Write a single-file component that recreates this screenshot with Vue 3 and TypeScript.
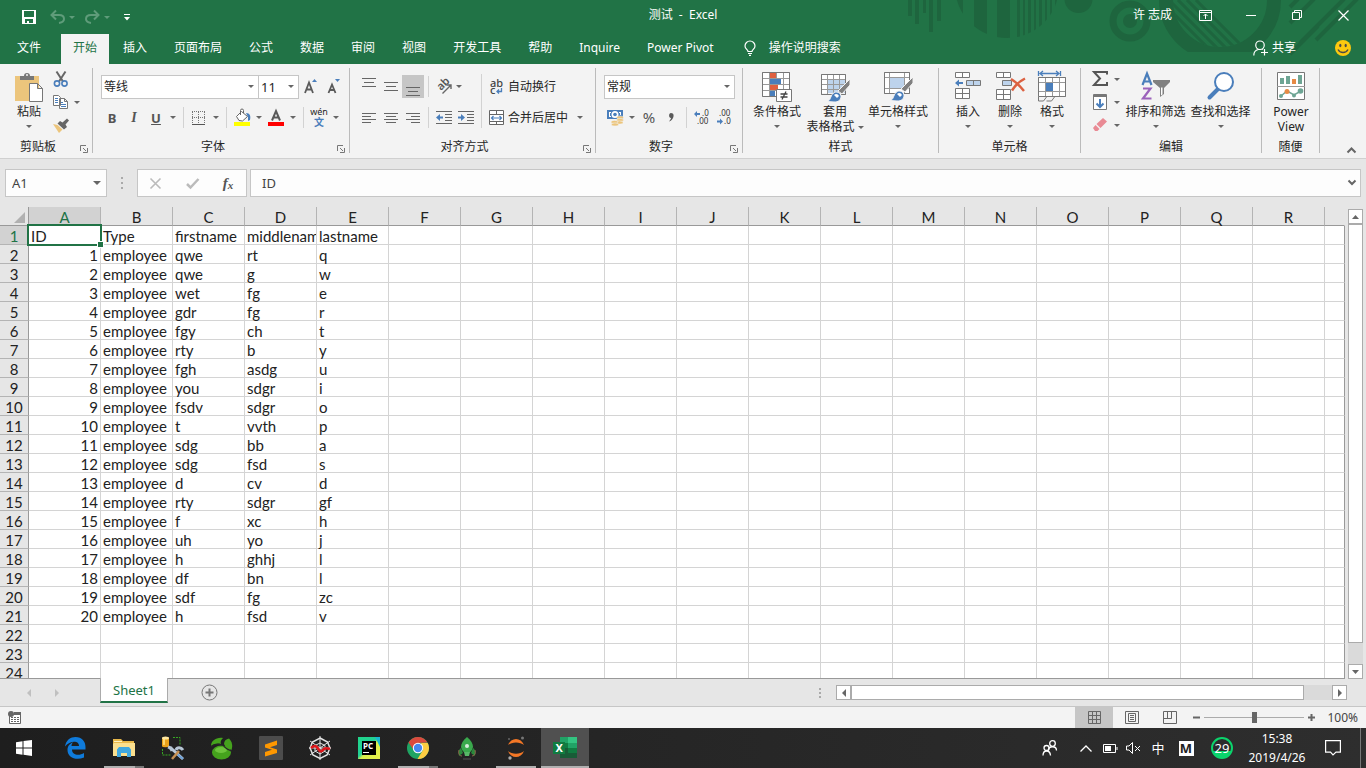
<script setup lang="ts">
import { ref } from 'vue'

const menus = ['开始', '插入', '页面布局', '公式', '数据', '审阅', '视图', '开发工具', '帮助', 'Inquire', 'Power Pivot']
const activeMenu = ref('开始')

const columns = 'ABCDEFGHIJKLMNOPQR'.split('')
const source: string[][] = [
  ['ID', 'Type', 'firstname', 'middlename', 'lastname'],
  ...[
    'qwe rt q', 'qwe g w', 'wet fg e', 'gdr fg r', 'fgy ch t', 'rty b y', 'fgh asdg u',
    'you sdgr i', 'fsdv sdgr o', 't vvth p', 'sdg bb a', 'sdg fsd s', 'd cv d', 'rty sdgr gf',
    'f xc h', 'uh yo j', 'h ghhj l', 'df bn l', 'sdf fg zc', 'h fsd v',
  ].map((line, i) => [String(i + 1), 'employee', ...line.split(' ')]),
]
const rowCount = 24
const cell = (r: number, c: number): string => source[r]?.[c] ?? ''

const fontName = ref('等线')
const fontSize = ref('11')
const numberFormat = ref('常规')
const address = ref('A1')
const formula = ref('ID')
const zoom = ref(50)
</script>

<template>
  <div class="app">
    <header class="head">
      <svg class="decor" width="506" height="64" viewBox="0 0 506 64" aria-hidden="true">
        <defs>
          <clipPath id="disc"><circle cx="147" cy="-14" r="52" /></clipPath>
          <clipPath id="ring"><circle cx="360" cy="0" r="47" /></clipPath>
          <clipPath id="cut"><rect x="290" y="0" width="216" height="52" /></clipPath>
        </defs>
        <g fill="#1e653e">
          <path d="M48 0h4v16h-4zM55 0h4v24h-4zM63 0h3v13h-3zM69 0h4v32h-4zM77 0h4v21h-4z" />
          <path clip-path="url(#disc)" d="M90 0h13v40h-13zM114 0h13v40h-13zM137 0h13v40h-13zM157 0h3v40h-3zM163 0h2v40h-2zM168 0h3v40h-3zM174 0h2v40h-2zM179 0h3v40h-3zM185 0h2v40h-2zM190 0h2v40h-2zM195 0h2v40h-2z" />
          <circle cx="218.500" cy="-1" r="14" />
          <circle cx="270" cy="21" r="7" />
        </g>
        <g fill="none" stroke="#1e653e">
          <circle cx="270" cy="21" r="17" stroke-width="7" />
          <circle cx="360" cy="0" r="54" stroke-width="14" clip-path="url(#cut)" />
          <path clip-path="url(#ring)" stroke-width="3" d="M300 0l60 60M309 0l60 60M318 0l60 60M327 0l60 60M336 0l60 60" />
          <path stroke-width="4" d="M430 7l8-8M430 23l24-24M440 43l44-44M456 40l41-41M430 54l28-28" />
        </g>
      </svg>
      <div class="titlebar">
        <div class="quick">
          <button class="q save" aria-label="保存"><svg width="14" height="14" viewBox="0 0 14 14"><path fill="#fff" fill-rule="evenodd" d="M0 0h14v14H0zM2 1v6h10V1zM3 9v4h2v-2h2v2h4V9z" /></svg></button>
          <button class="q dim" aria-label="撤消"><svg width="15" height="14" viewBox="0 0 15 14"><path fill="none" stroke="#5f9c7a" stroke-width="2" d="M6 0.500L1.500 5L6 9.500M2 5h7c3 0 5 1.500 5 4s-2 3.500-5 4" /></svg><i class="caret"></i></button>
          <button class="q dim" aria-label="恢复"><svg width="15" height="14" viewBox="0 0 15 14"><path fill="none" stroke="#5f9c7a" stroke-width="2" d="M9 0.500L13.500 5L9 9.500M13 5H6C3 5 1 6.500 1 9s2 3.500 5 4" /></svg><i class="caret"></i></button>
          <button class="q" aria-label="自定义快速访问工具栏"><svg width="6" height="7" viewBox="0 0 6 7"><path fill="#fff" d="M0 0h6v1H0zM0 3h6L3 6.500z" /></svg></button>
        </div>
        <div class="title">测试&nbsp; -&nbsp; Excel</div>
        <div class="sys">
          <span class="user">许 志成</span>
          <button class="s" aria-label="功能区显示选项"><svg width="13" height="11" viewBox="0 0 13 11"><path fill="none" stroke="#fff" d="M0.500 0.500h12v10h-12zM0 2.500h13M6.500 4v5M4.500 6l2-2 2 2" /></svg></button>
          <button class="s" aria-label="最小化"><svg width="10" height="10" viewBox="0 0 10 10"><path stroke="#fff" d="M0 5.500h10" /></svg></button>
          <button class="s" aria-label="还原"><svg width="10" height="10" viewBox="0 0 10 10"><path fill="none" stroke="#fff" d="M0.500 2.500h7v7h-7zM2.500 2V0.500h7v7H8" /></svg></button>
          <button class="s" aria-label="关闭"><svg width="11" height="11" viewBox="0 0 11 11"><path stroke="#fff" stroke-width="1.200" d="M0.500 0.500l10 10M10.500 0.500l-10 10" /></svg></button>
        </div>
      </div>
      <nav class="menus">
        <button class="menu file">文件</button>
        <button v-for="m in menus" :key="m" class="menu" :class="{ on: m === activeMenu }" @click="activeMenu = m">{{ m }}</button>
        <button class="tell"><svg width="12" height="15" viewBox="0 0 12 15"><path fill="none" stroke="#fff" stroke-width="1.200" d="M4 10.500C4 8.500 1 8 1 5a5 5 0 0 1 10 0c0 3-3 3.500-3 5.500zM4 12.500h4M5 14.400h2" /></svg>操作说明搜索</button>
        <button class="share"><svg width="15" height="16" viewBox="0 0 15 16"><path fill="none" stroke="#fff" stroke-width="1.200" d="M7 1a4 4 0 1 1 0 8.500A4 4 0 0 1 7 1zM0.800 15.500c0-3.500 2-5.500 4.500-6M11.500 9v6.500M8 12.500h7M9 9l1 .6" /></svg>共享</button>
        <button class="smile" aria-label="反馈"><svg width="16" height="16" viewBox="0 0 16 16"><circle cx="8" cy="8" r="8" fill="#fdc90f" /><ellipse cx="5.300" cy="5.500" rx="1.100" ry="1.700" fill="#4a4a4a" /><ellipse cx="10.700" cy="5.500" rx="1.100" ry="1.700" fill="#4a4a4a" /><path fill="none" stroke="#4a4a4a" stroke-width="1.300" d="M3 9.500c2 4 8 4 10 0" /></svg></button>
      </nav>
    </header>

    <section class="ribbon">
      <div class="group clip">
        <div class="body">
          <button class="big">
            <svg width="30" height="32" viewBox="0 0 30 32"><path fill="#ecc57c" d="M1 6h24v25H1z" /><path fill="#777" d="M6 6h4a3 3 0 0 1 6 0h4v4H6z" /><circle cx="13" cy="5" r="1" fill="#f3f3f3" /><path fill="#fff" stroke="#777" d="M15.500 13.500h8l5 5v13h-13zM23.500 13.500v5h5" /></svg>
            <span>粘贴</span><i class="caret"></i>
          </button>
          <div class="stack">
            <button class="tool" aria-label="剪切"><svg width="16" height="16" viewBox="0 0 16 16"><path stroke="#666" stroke-width="2" d="M3.500 0.500l6.500 10M12.500 0.500L6 10.500" /><g fill="none" stroke="#4a7ebb" stroke-width="1.600"><circle cx="4" cy="12.500" r="2.600" /><circle cx="11.500" cy="12.500" r="2.600" /></g></svg></button>
            <div class="line"><button class="tool" aria-label="复制"><svg width="16" height="14" viewBox="0 0 16 14"><path fill="#fff" stroke="#777" d="M0.500 0.500h5l2 2v8h-7zM6.500 3.500h5l3 3v7h-8zM11.500 3.500v3h3" /><path stroke="#4a7ebb" d="M2 3.500h3M2 5.500h3M2 7.500h3M8 7.500h2M8 9.500h5M8 11.500h5" /></svg></button><button class="drop" aria-label="复制选项"><i class="caret"></i></button></div>
            <button class="tool" aria-label="格式刷"><svg width="16" height="15" viewBox="0 0 16 15"><path fill="#ecc57c" d="M0 6l4.500 1L9.500 11.500 6 15z" /><path fill="#666" d="M4.500 5.500L7 3l2.500 1.500L14 0.500l2 2-3.500 4L14 9l-3 2.500z" /></svg></button>
          </div>
        </div>
        <footer><span>剪贴板</span><button class="launch" aria-label="剪贴板设置"><svg width="8" height="8" viewBox="0 0 8 8"><path fill="none" stroke="#777" d="M0.500 6V0.500H6M3 3l3 3M7.500 3v4.500H3" /></svg></button></footer>
      </div>

      <div class="group font">
        <div class="body rows">
          <div class="line">
            <label class="pick face"><select v-model="fontName" aria-label="字体"><option>等线</option><option>宋体</option></select><i class="caret"></i></label>
            <label class="pick size"><select v-model="fontSize" aria-label="字号"><option>11</option><option>12</option></select><i class="caret"></i></label>
            <button class="tool wide" aria-label="增大字号"><svg width="14" height="16" viewBox="0 0 14 16"><path fill="none" stroke="#5a5a5a" stroke-width="1.800" d="M1 14L5 3.500 9 14M2.500 10.500h5" /><path fill="#4a7ebb" d="M8 3l2.500-3L13 3z" /></svg></button>
            <button class="tool" aria-label="减小字号"><svg width="14" height="16" viewBox="0 0 14 16"><path fill="none" stroke="#5a5a5a" stroke-width="1.800" d="M1.500 14L5 5.500 8.500 14M2.500 11h5" /><path fill="#4a7ebb" d="M8 0h5l-2.500 3z" /></svg></button>
          </div>
          <div class="line">
            <button class="tool b">B</button><button class="tool it">I</button><button class="tool u">U</button><button class="drop" aria-label="下划线选项"><i class="caret"></i></button><i class="sep"></i>
            <button class="tool" aria-label="边框"><svg width="14" height="14" viewBox="0 0 14 14" shape-rendering="crispEdges"><path stroke="#777" stroke-dasharray="1 1" fill="none" d="M0 0.500h13M0.500 1v12M6.500 1v12M12.500 1v12M0 6.500h13" /><path stroke="#555" d="M0 13.500h13" /></svg></button><button class="drop" aria-label="边框选项"><i class="caret"></i></button><i class="sep"></i>
            <button class="tool" aria-label="填充颜色"><svg width="17" height="17" viewBox="0 0 17 17"><path fill="#fff" stroke="#666" d="M2.500 7.500l5-5 6 5-5 4.500-3.500-0.500zM6.500 6V1.500a1.500 1.500 0 0 1 3 0V4" /><path fill="#4a7ebb" d="M12 4c4 0 5 3 4 7l-2 1V8z" /><path fill="#ff0" d="M0 13h16v4H0z" /></svg></button><button class="drop" aria-label="填充选项"><i class="caret"></i></button>
            <button class="tool" aria-label="字体颜色"><svg width="16" height="17" viewBox="0 0 16 17"><path fill="none" stroke="#5a5a5a" stroke-width="2" d="M4 11.500L8 2l4 9.500M5.500 8.500h5" /><path fill="#f00" d="M0 13h16v4H0z" /></svg></button><button class="drop" aria-label="字体颜色选项"><i class="caret"></i></button><i class="sep"></i>
            <button class="tool wen" aria-label="拼音"><span>wén</span><b>文</b></button><button class="drop" aria-label="拼音选项"><i class="caret"></i></button>
          </div>
        </div>
        <footer><span>字体</span><button class="launch" aria-label="字体设置"><svg width="8" height="8" viewBox="0 0 8 8"><path fill="none" stroke="#777" d="M0.500 6V0.500H6M3 3l3 3M7.500 3v4.500H3" /></svg></button></footer>
      </div>

      <div class="group align">
        <div class="body">
          <div class="rows left">
            <div class="line">
              <button class="tool" aria-label="顶端对齐"><svg width="14" height="18" viewBox="0 0 14 18"><path stroke="#666" d="M0 0.500h14M2 4.500h10M0 8.500h14" /></svg></button>
              <button class="tool" aria-label="垂直居中"><svg width="14" height="18" viewBox="0 0 14 18"><path stroke="#666" d="M0 4.500h14M2 8.500h10M0 12.500h14" /></svg></button>
              <button class="tool pressed" aria-label="底端对齐"><svg width="14" height="18" viewBox="0 0 14 18"><path stroke="#666" d="M0 9.500h14M2 13.500h10M0 17.500h14" /></svg></button>
              <i class="sep"></i>
              <button class="tool" aria-label="方向"><svg width="18" height="18" viewBox="0 0 18 18"><text x="0" y="0" transform="translate(6 13) rotate(-45)" font-family="Noto Sans" font-size="11" font-weight="600" fill="#555">ab</text><path fill="none" stroke="#666" stroke-width="1.400" d="M7.500 15.500l8-8M12 7h4v4" /></svg></button><button class="drop tight" aria-label="方向选项"><i class="caret"></i></button>
            </div>
            <div class="line">
              <button class="tool" aria-label="左对齐"><svg width="14" height="12" viewBox="0 0 14 12"><path stroke="#666" d="M0 1.500h14M0 4.500h9M0 7.500h14M0 10.500h9" /></svg></button>
              <button class="tool" aria-label="居中"><svg width="14" height="12" viewBox="0 0 14 12"><path stroke="#666" d="M0 1.500h14M2 4.500h10M0 7.500h14M2 10.500h10" /></svg></button>
              <button class="tool" aria-label="右对齐"><svg width="14" height="12" viewBox="0 0 14 12"><path stroke="#666" d="M0 1.500h14M5 4.500h9M0 7.500h14M5 10.500h9" /></svg></button>
              <i class="sep"></i>
              <button class="tool" aria-label="减少缩进量"><svg width="16" height="14" viewBox="0 0 16 14"><path stroke="#666" d="M0 0.500h16M9 3.500h7M9 6.500h7M9 9.500h7M0 12.500h16" /><path fill="#4a7ebb" d="M0 6.500L4 3v2.500h3v2H4V10z" /></svg></button>
              <button class="tool" aria-label="增加缩进量"><svg width="16" height="14" viewBox="0 0 16 14"><path stroke="#666" d="M0 0.500h16M9 3.500h7M9 6.500h7M9 9.500h7M0 12.500h16" /><path fill="#4a7ebb" d="M7 6.500L3 3v2.500H0v2h3V10z" /></svg></button>
            </div>
          </div>
          <div class="rows right">
            <button class="text"><svg width="16" height="18" viewBox="0 0 16 18"><g font-family="Noto Sans" font-size="11" font-weight="500" fill="#444"><text x="1" y="9">ab</text><text x="1" y="16">c</text></g><path fill="none" stroke="#4a7ebb" stroke-width="1.300" d="M12.500 10v3.500H8M10 11.500l-2 2 2 2" /></svg>自动换行</button>
            <div class="line"><button class="text"><svg width="16" height="16" viewBox="0 0 16 16"><path fill="#fff" stroke="#666" d="M0.500 0.500h14v14h-14zM0 4.500h15M0 11.500h15M7.500 0v4M7.500 12v3" /><path fill="none" stroke="#4a7ebb" stroke-width="1.200" d="M2.500 8h10M4.500 6l-2 2 2 2M10.500 6l2 2-2 2" /></svg>合并后居中</button><button class="drop far" aria-label="合并选项"><i class="caret"></i></button></div>
          </div>
        </div>
        <footer><span>对齐方式</span><button class="launch" aria-label="对齐设置"><svg width="8" height="8" viewBox="0 0 8 8"><path fill="none" stroke="#777" d="M0.500 6V0.500H6M3 3l3 3M7.500 3v4.500H3" /></svg></button></footer>
      </div>

      <div class="group number">
        <div class="body rows">
          <div class="line"><label class="pick format"><select v-model="numberFormat" aria-label="数字格式"><option>常规</option><option>文本</option></select><i class="caret"></i></label></div>
          <div class="line">
            <button class="tool" aria-label="会计数字格式"><svg width="17" height="16" viewBox="0 0 17 16"><path fill="#4a7ebb" d="M0 0h16v9H0z" /><path fill="#fff" d="M2 2h2v1H3v3h1v1H2zM14 2h-2v1h1v2h1zM8 1a3.500 3.500 0 0 1 0 7 3.500 3.500 0 0 1 0-7z" /><circle cx="8" cy="4.500" r="1.800" fill="#4a7ebb" /><g fill="#ecc57c" stroke="#f3f3f3" stroke-width="0.500"><ellipse cx="13" cy="7.500" rx="3.500" ry="1.600" /><ellipse cx="13" cy="10" rx="3.500" ry="1.600" /><ellipse cx="12.500" cy="12.500" rx="3.500" ry="1.600" /><ellipse cx="7.500" cy="12" rx="3.500" ry="1.600" /><ellipse cx="8" cy="14.400" rx="3.500" ry="1.500" /></g></svg></button><button class="drop" aria-label="会计格式选项"><i class="caret"></i></button>
            <button class="tool pct">%</button>
            <button class="tool" aria-label="千位分隔样式"><svg width="6" height="9" viewBox="0 0 6 9"><path fill="#5a5a5a" d="M3 0c3 0 3 3 2 5S3 8 1 8.500C2 7 3 6 3 5 0.500 5 0.500 0 3 0z" /></svg></button><i class="sep"></i>
            <button class="tool" aria-label="增加小数位数"><svg width="16" height="16" viewBox="0 0 16 16"><g font-family="Noto Sans" font-size="8" fill="#333"><text x="8" y="6">.0</text><text x="3" y="14">.00</text></g><path fill="#4a7ebb" d="M0 4l3-3v2h3v2H3v2z" /></svg></button>
            <button class="tool" aria-label="减少小数位数"><svg width="16" height="16" viewBox="0 0 16 16"><g font-family="Noto Sans" font-size="8" fill="#333"><text x="3" y="6">.00</text><text x="8" y="14">.0</text></g><path fill="#4a7ebb" d="M7 11.500l-3-3v2H1v2h3v2z" /></svg></button>
          </div>
        </div>
        <footer><span>数字</span><button class="launch" aria-label="数字设置"><svg width="8" height="8" viewBox="0 0 8 8"><path fill="none" stroke="#777" d="M0.500 6V0.500H6M3 3l3 3M7.500 3v4.500H3" /></svg></button></footer>
      </div>

      <div class="group styles">
        <div class="body">
          <button class="big">
            <svg width="32" height="32" viewBox="0 0 32 32"><path fill="#fff" stroke="#999" d="M1.500 2.500h27v24h-27zM1.500 8.500h27M1.500 14.500h27M1.500 20.500h27M8.500 2.500v24M15.500 2.500v24M22.500 2.500v24" /><path fill="#e0603f" d="M9 3h6v5H9zM9 15h8v5H9z" /><path fill="#4a7ebb" d="M9 9h11v5H9zM9 21h5v5H9z" /><path fill="none" stroke="#777" d="M1.500 2.500h27v24h-27z" /><path fill="#fff" stroke="#777" d="M15.500 19.500h15v12h-15z" /><path fill="none" stroke="#444" stroke-width="1.300" d="M19.500 24h7M19.500 27h7M25 21.500l-4 8" /></svg>
            <span>条件格式</span><i class="caret"></i>
          </button>
          <button class="big two">
            <svg width="32" height="32" viewBox="0 0 32 32"><path fill="#bdd3ec" d="M9 9h17v14H9z" /><path fill="#fff" d="M2 5h24v5H2zM2 5h7v18H2z" /><path fill="none" stroke="#999" d="M2.500 4.500h24v20h-24zM2.500 9.500h24M2.500 14.500h24M2.500 19.500h24M8.500 4.500v20M14.500 4.500v20M20.500 4.500v20" /><path fill="none" stroke="#777" d="M2.500 4.500h24v20h-24z" /><path fill="#808080" stroke="#f3f3f3" d="M31 9v6l-8 9-4-3z" /><path fill="#4a7ebb" stroke="#f3f3f3" d="M8 31.500c4-1 3-5 6-8s8-1 8 3-3 5.500-7 5.500z" /><path fill="#fff" d="M15 25c2-2 4-1 5 1l-2 2z" /></svg>
            <span>套用</span><span class="second">表格格式<i class="caret"></i></span>
          </button>
          <button class="big wider">
            <svg width="32" height="32" viewBox="0 0 32 32"><path fill="#fff" stroke="#999" d="M2.500 2.500h25v21h-25zM2.500 7.500h25M2.500 18.500h25M7.500 2.500v21M22.500 2.500v21" /><path fill="#bdd3ec" d="M8 8h14v10H8z" /><path fill="none" stroke="#777" d="M2.500 2.500h25v21h-25z" /><path fill="#808080" stroke="#f3f3f3" d="M31 7v6l-8 9-4-3z" /><path fill="#4a7ebb" stroke="#f3f3f3" d="M8 30.500c4-1 3-5 6-8s8-1 8 3-3 5.500-7 5.500z" /><path fill="#fff" d="M15 24c2-2 4-1 5 1l-2 2z" /></svg>
            <span>单元格样式</span><i class="caret"></i>
          </button>
        </div>
        <footer><span>样式</span></footer>
      </div>

      <div class="group cells">
        <div class="body">
          <button class="big">
            <svg width="28" height="32" viewBox="0 0 28 32"><path fill="#fff" stroke="#777" d="M1.500 2.500h14v5h-14zM8.500 2.500v5M1.500 18.500h14v10h-14zM8.500 18.500v10M1.500 23.500h14" /><path fill="#bdd3ec" stroke="#777" d="M12.500 10.500h14v5h-14zM19.500 10.500v5" /><path fill="#4a7ebb" d="M1 13l4-3.500V12h4v2H5v2.500z" /></svg>
            <span>插入</span><i class="caret"></i>
          </button>
          <button class="big">
            <svg width="32" height="32" viewBox="0 0 32 32"><path fill="#fff" stroke="#777" d="M2.500 2.500h14v5h-14zM9.500 2.500v5M2.500 19.500h14v10h-14zM9.500 19.500v10M2.500 24.500h14" /><path fill="#bdd3ec" stroke="#777" d="M8.500 10.500h9v5h-9z" /><path fill="none" stroke="#dc6141" stroke-width="2.500" d="M17 9c5 3 9 7 13 12M31 8.500c-6 3-10 7-13 12" /></svg>
            <span>删除</span><i class="caret"></i>
          </button>
          <button class="big">
            <svg width="30" height="32" viewBox="0 0 30 32"><path fill="none" stroke="#4a7ebb" stroke-width="1.300" d="M1.500 1v5M23.500 1v5M3 3.500h19M6 1L3 3.500 6 6M19 1l3 2.500L19 6" /><path fill="#fff" stroke="#999" d="M1.500 7.500h27v19h-27zM1.500 12.500h27M1.500 21.500h27M8.500 7.500v19M15.500 7.500v19M22.500 7.500v19" /><path fill="#4a7ebb" d="M9 13h7v8H9z" /><path fill="none" stroke="#777" d="M1.500 7.500h27v19h-27zM1.500 27v4h5l3-4M9.500 31h5l3-4" /></svg>
            <span>格式</span><i class="caret"></i>
          </button>
        </div>
        <footer><span>单元格</span></footer>
      </div>

      <div class="group edit">
        <div class="body">
          <div class="stack">
            <div class="line"><button class="tool" aria-label="自动求和"><svg width="16" height="16" viewBox="0 0 16 16"><path fill="none" stroke="#555" stroke-width="2" d="M15 3.500V1H2l6 6.500L2 14h13v-3" /></svg></button><button class="drop" aria-label="求和选项"><i class="caret"></i></button></div>
            <div class="line"><button class="tool" aria-label="填充"><svg width="15" height="16" viewBox="0 0 15 16"><path fill="#fff" stroke="#777" d="M0.500 0.500h13v15h-13z" /><path fill="#777" d="M1 1h13v2H1z" /><path fill="none" stroke="#4a7ebb" stroke-width="2" d="M7 5v8M3.500 9.500L7 13l3.500-3.500" /></svg></button><button class="drop" aria-label="填充选项"><i class="caret"></i></button></div>
            <div class="line"><button class="tool" aria-label="清除"><svg width="14" height="14" viewBox="0 0 14 14"><path fill="#e98a94" d="M10 0l4 3.500L7.500 10 3.500 6zM2.500 7l4 4L4.500 13H2L0 10z" /></svg></button><button class="drop" aria-label="清除选项"><i class="caret"></i></button></div>
          </div>
          <button class="big wider">
            <svg width="32" height="32" viewBox="0 0 32 32"><path fill="none" stroke="#4a7ebb" stroke-width="2.200" d="M2.500 15L7 3.500 11.500 15M4 11.500h6" /><path fill="none" stroke="#9b62bb" stroke-width="2.200" d="M3 18.500h7.500L3 28.500h8.500" /><path fill="#808080" d="M13 10h17v2l-6 6v6l-4 3v-9l-7-6z" /><path fill="#fff" d="M21 17.500h1.500v7L21 25.500z" /></svg>
            <span>排序和筛选</span><i class="caret"></i>
          </button>
          <button class="big wider">
            <svg width="30" height="32" viewBox="0 0 30 32"><path stroke="#4a7ebb" stroke-width="4" stroke-linecap="round" d="M3.500 27.500l9-9" /><circle cx="18" cy="12" r="9" fill="#fff" stroke="#4a7ebb" stroke-width="2" /></svg>
            <span>查找和选择</span><i class="caret"></i>
          </button>
        </div>
        <footer><span>编辑</span></footer>
      </div>

      <div class="group pv">
        <div class="body">
          <button class="big">
            <svg width="30" height="32" viewBox="0 0 30 32"><path fill="#fff" stroke="#777" d="M1.500 2.500h27v27h-27z" /><path stroke="#999" d="M1 16.500h28" /><path fill="#6ea594" d="M4 8h4v6H4zM10 6h4v8h-4zM22 5h4v9h-4z" /><path fill="#e68a45" d="M16 9h4v5h-4z" /><path fill="none" stroke="#6ea594" stroke-width="1.500" d="M5 26l6-5 7 4 7-4" /><circle cx="11" cy="21.500" r="2.500" fill="#e68a45" /><g fill="#6ea594"><circle cx="5" cy="26" r="2" /><circle cx="18" cy="25.500" r="2" /><circle cx="24.500" cy="21" r="2.800" /></g></svg>
            <span>Power</span><span class="second">View</span>
          </button>
        </div>
        <footer><span>随便</span></footer>
      </div>
      <button class="collapse" aria-label="折叠功能区"><svg width="9" height="6" viewBox="0 0 9 6"><path fill="none" stroke="#666" stroke-width="2" d="M0.500 5.500l4-4 4 4" /></svg></button>
    </section>

    <section class="formula">
      <label class="box name"><input v-model="address" aria-label="名称框" /><i class="caret large"></i></label>
      <svg class="grip" width="2" height="12" viewBox="0 0 2 12"><path fill="#aaa" d="M0 0h2v2H0zM0 5h2v2H0zM0 10h2v2H0z" /></svg>
      <div class="box acts">
        <button aria-label="取消"><svg width="12" height="11" viewBox="0 0 12 11"><path stroke="#bbb" stroke-width="1.600" d="M0.500 0.500l10 10M10.500 0.500l-10 10" /></svg></button>
        <button aria-label="输入"><svg width="13" height="11" viewBox="0 0 13 11"><path fill="none" stroke="#bbb" stroke-width="2.500" d="M1 6l3.500 3.500L12.500 1" /></svg></button>
        <button class="fx"><span>f</span><small>x</small></button>
      </div>
      <div class="box value"><input v-model="formula" aria-label="编辑栏" /><svg width="8" height="6" viewBox="0 0 8 6"><path fill="none" stroke="#666" stroke-width="2" d="M0.500 0.500l3.500 3.500 3.500-3.500" /></svg></div>
    </section>

    <main class="sheet">
      <div class="grid">
        <table>
          <colgroup><col class="rh" /><col v-for="c in columns" :key="c" class="c" /><col /></colgroup>
          <thead>
            <tr>
              <th class="corner"><svg width="11" height="11" viewBox="0 0 11 11"><path fill="#b1b1b1" d="M11 0v11H0z" /></svg></th>
              <th v-for="(c, i) in columns" :key="c" :class="{ sel: i === 0 }">{{ c }}</th>
              <th class="rest"></th>
            </tr>
          </thead>
          <tbody>
            <tr v-for="r in rowCount" :key="r">
              <th :class="{ sel: r === 1 }">{{ r }}</th>
              <td v-for="(c, i) in columns" :key="c" :class="{ num: i === 0 && r > 1, active: i === 0 && r === 1 }">{{ cell(r - 1, i) }}</td>
              <td class="rest"></td>
            </tr>
          </tbody>
        </table>
      </div>
      <div class="vscroll">
        <button aria-label="向上滚动"><svg width="7" height="4" viewBox="0 0 7 4"><path fill="#666" d="M0 4h7L3.500 0z" /></svg></button>
        <div class="vthumb"></div><div class="vtrack"></div>
        <button aria-label="向下滚动"><svg width="7" height="4" viewBox="0 0 7 4"><path fill="#666" d="M0 0h7L3.500 4z" /></svg></button>
      </div>
    </main>

    <section class="tabs">
      <div class="step">
        <button aria-label="上一个工作表"><svg width="4" height="8" viewBox="0 0 4 8"><path fill="#c0c0c0" d="M4 0v8L0 4z" /></svg></button>
        <button aria-label="下一个工作表"><svg width="4" height="8" viewBox="0 0 4 8"><path fill="#c0c0c0" d="M0 0v8l4-4z" /></svg></button>
      </div>
      <button class="tab">Sheet1</button>
      <button class="add" aria-label="新工作表"><svg width="17" height="17" viewBox="0 0 17 17"><circle cx="8.500" cy="8.500" r="7.500" fill="none" stroke="#777" /><path stroke="#777" stroke-width="2" d="M4.500 8.500h8M8.500 4.500v8" /></svg></button>
      <svg class="grip2" width="2" height="10" viewBox="0 0 2 10"><path fill="#aaa" d="M0 0h2v2H0zM0 4h2v2H0zM0 8h2v2H0z" /></svg>
      <div class="hscroll">
        <button aria-label="向左滚动"><svg width="4" height="8" viewBox="0 0 4 8"><path fill="#666" d="M4 0v8L0 4z" /></svg></button>
        <div class="hthumb"></div><div class="htrack"></div>
        <button aria-label="向右滚动"><svg width="4" height="8" viewBox="0 0 4 8"><path fill="#666" d="M0 0v8l4-4z" /></svg></button>
      </div>
    </section>

    <section class="status">
      <button class="macro" aria-label="录制宏"><svg width="13" height="13" viewBox="0 0 13 13"><path fill="#fff" stroke="#666" d="M1.500 3.500h11v9h-11z" /><path fill="#666" d="M6 1h7v3H6z" /><path stroke="#666" stroke-dasharray="2 1" d="M3 6.500h9M3 8.500h9M3 10.500h9" /><circle cx="3" cy="3" r="3" fill="#666" /></svg></button>
      <div class="views">
        <button class="on" aria-label="普通"><svg width="13" height="13" viewBox="0 0 13 13"><path fill="none" stroke="#666" d="M0.500 0.500h12v12h-12zM0 4.500h13M0 8.500h13M4.500 0v13M8.500 0v13" /></svg></button>
        <button aria-label="页面布局"><svg width="14" height="13" viewBox="0 0 14 13"><path fill="none" stroke="#666" d="M0.500 0.500h13v12h-13zM3.500 2.500h7v8h-7zM5 4.500h4M5 6.500h4M5 8.500h4" /></svg></button>
        <button aria-label="分页预览"><svg width="14" height="13" viewBox="0 0 14 13"><path fill="none" stroke="#666" d="M0.500 0.500h13v12h-13zM4.500 0v7.500h4V0M1 7.500h4M8.500 7.500V0" /></svg></button>
      </div>
      <button class="pm" aria-label="缩小"><svg width="7" height="7" viewBox="0 0 7 7"><path fill="#666" d="M0 2.500h7v2H0z" /></svg></button>
      <input v-model="zoom" class="slider" type="range" min="0" max="100" aria-label="显示比例" />
      <button class="pm" aria-label="放大"><svg width="7" height="7" viewBox="0 0 7 7"><path fill="#666" d="M0 2.500h2.500V0h2v2.500H7v2H4.500V7h-2V4.500H0z" /></svg></button>
      <button class="percent">100%</button>
    </section>

    <footer class="taskbar">
      <button class="app-btn start" aria-label="开始菜单"><svg width="16" height="16" viewBox="0 0 16 16"><path fill="#fff" d="M0 2.300l6.500-1v6.200H0zM7.500 1.100L16 0v7.500H7.500zM0 8.500h6.500v6.200l-6.500-1zM7.500 8.500H16V16l-8.500-1.200z" /></svg></button>
      <button class="app-btn" aria-label="Edge"><svg width="21" height="22" viewBox="0 0 21 22"><path fill="#0f7bdb" d="M0 9.500C1 3 5.500 0 10.500 0 17 0 20.500 4.500 20.500 10v2.500H7c0 6 7.500 6.500 12 3.500v4.500C11 24 2.500 20.500 2.500 13c0-4 2.500-6.500 5.500-7.700C7 6.500 6.600 7.700 6.500 9h7.500c.3-6-9.500-5.500-14 .5z" /></svg></button>
      <button class="app-btn" aria-label="文件资源管理器"><svg width="22" height="20" viewBox="0 0 22 20"><path fill="#e8b84a" d="M0 1h8l2 2h11v15H0z" /><path fill="#fbe08f" d="M1 5h21v13H0V6z" /><path fill="#fff3c4" d="M1 3h8v1H1z" /><path fill="#40a8e0" d="M4 19v-7.500L6 9h10l2 2.500V19h-4v-4H8v4z" /></svg><span class="run"></span><span class="run more"></span></button>
      <button class="app-btn" aria-label="数据库工具"><svg width="24" height="24" viewBox="0 0 24 24"><path fill="#e9a21b" d="M1 2h7v8H1z" /><path fill="#ffd86e" d="M2 2h2v8H2z" /><ellipse cx="4.500" cy="2" rx="3.500" ry="1.500" fill="#ffe7a0" /><ellipse cx="4.500" cy="10" rx="3.500" ry="1.200" fill="#e9a21b" /><path fill="none" stroke="#36a822" stroke-dasharray="2 1" d="M12 1.500h7v8M1.500 13v6h8" /><path stroke="#bbc9d8" stroke-width="3" d="M9 12l3 2 10 9" /><path stroke="#6ea2d8" stroke-width="2" d="M15 17l7 6" /><path stroke="#c89152" stroke-width="2.500" d="M11 23l7-8" /><path fill="none" stroke="#b6c5d4" stroke-width="3" d="M15 14c1-3 5-3 7 0M7 11l3 1 1 3" /></svg></button>
      <button class="app-btn" aria-label="Xshell"><svg width="24" height="23" viewBox="0 0 24 23"><g fill="#45a31d"><path d="M1 9C1 4 6 0 13 1c-2 2-3 4-2 6C7 6 3 7 1 9z" /><path d="M14 7c0-3 2-5 5-5.500 3 3 4 7 2.500 11.500C18 12 15 10 14 7z" /><ellipse cx="11.500" cy="15.500" rx="9.500" ry="7" /></g><ellipse cx="11" cy="13" rx="6" ry="3" fill="#6dc43d" /><path stroke="#262626" stroke-width="1.300" fill="none" d="M1 10c3-3 8-3 12-2 2 3 5 5 9 6" /></svg></button>
      <button class="app-btn" aria-label="Sublime Text"><svg width="24" height="24" viewBox="0 0 24 24"><rect width="24" height="24" rx="1" fill="#4c4c4c" /><path fill="#ff9800" d="M6 8.500L18 4.500V9l-7 2.300 7 2.200V17L6 20.500V16l7-2.300-7-2.200z" /></svg></button>
      <button class="app-btn" aria-label="Spyder"><svg width="24" height="24" viewBox="0 0 24 24"><g fill="none" stroke="#e4e4e4"><path d="M12 0v24M2 5l20 14M22 5L2 19M1 12h22" /><path stroke-width="1.500" d="M12 2l7.500 4L22 12l-3 7-7 3.500L5 19l-3-7 2.500-6z" /><path d="M12 7l5 2.500V15l-5 3-5-3V9.500z" /></g><path fill="none" stroke="#e0161a" stroke-width="2.600" stroke-linejoin="round" d="M3 12c5-4 6-1 8 2s4 0 5-1 3-1 6 0" /></svg></button>
      <button class="app-btn" aria-label="PyCharm"><svg width="22" height="22" viewBox="0 0 22 22"><defs><linearGradient id="pc" x1="0" y1="0" x2="1" y2="1"><stop offset="0" stop-color="#20d78a" /><stop offset=".45" stop-color="#22cf96" /><stop offset=".55" stop-color="#d9f04b" /><stop offset="1" stop-color="#e8f24a" /></linearGradient></defs><path fill="url(#pc)" d="M0 0h22v22H0z" /><path fill="#18b7cf" d="M17 0h5v10z" /><path fill="#000" d="M4 4h14v14H4z" /><text x="5" y="12" font-family="Noto Sans" font-weight="700" font-size="8" fill="#fff">PC</text><path fill="#fff" d="M5 15h6v1H5z" /></svg></button>
      <button class="app-btn" aria-label="Chrome"><svg width="22" height="22" viewBox="0 0 22 22"><circle cx="11" cy="11" r="11" fill="#1fa463" /><path fill="#db4a3e" d="M1.500 5.500A11 11 0 0 1 20.500 5.500L11 6l-5 6z" /><path fill="#fdcd42" d="M20.500 5.500A11 11 0 0 1 10.500 22L16 13 14 6h6.500z" /><circle cx="11" cy="11" r="5.200" fill="#fff" /><circle cx="11" cy="11" r="4.200" fill="#4687f2" /></svg><span class="run"></span><span class="run more"></span></button>
      <button class="app-btn" aria-label="Rocket"><svg width="18" height="24" viewBox="0 0 18 24"><path fill="#3aa94d" d="M9 1c4 3 6 7 6 10-1 4-3 6-6 6s-5-2-6-6C3 8 5 4 9 1z" /><path fill="#2b8a3c" d="M3 12c-3 2-2 5-2 8l4-3M15 12c3 2 2 5 2 8l-4-3" /><circle cx="9" cy="10" r="2" fill="#d8eedd" /><path stroke="#8a6a4a" fill="none" d="M1 14c-1 3 0 6 3 6M17 14c1 3 0 6-3 6" /><path fill="#57b867" d="M6 16h6l-1 4H7z" /><path stroke="#555" d="M5 23h8" /></svg></button>
      <button class="app-btn" aria-label="Jupyter"><svg width="20" height="24" viewBox="0 0 20 24"><path fill="#f37726" d="M2 9C5 1 15 1 18 9 14 5.500 6 5.500 2 9zM2 15c3 8 13 8 16 0-4 3.500-12 3.500-16 0z" /><circle cx="16.500" cy="2" r="1.500" fill="#777" /><circle cx="3" cy="3" r="1" fill="#666" /><circle cx="4" cy="22" r="1.700" fill="#aaa" /></svg><span class="run full"></span></button>
      <button class="app-btn live" aria-label="Excel"><svg width="24" height="22" viewBox="0 0 24 22"><path fill="#21a366" d="M7 0h17v6H7z" /><path fill="#33c481" d="M15 0h9v6h-9z" /><path fill="#107c41" d="M7 6h17v5H7z" /><path fill="#21a366" d="M15 6h9v5h-9z" /><path fill="#185c37" d="M7 11h17v10H7z" /><path fill="#107c41" d="M15 11h9v5h-9zM0 5h12v12H0z" /><text x="2.500" y="15" font-family="Noto Sans" font-weight="700" font-size="11" fill="#fff">X</text></svg><span class="run whole"></span></button>
      <div class="tray">
        <button class="t30" aria-label="人脉"><svg width="16" height="16" viewBox="0 0 16 16"><g fill="none" stroke="#fff" stroke-width="1.300"><circle cx="10.500" cy="3.500" r="2.800" /><circle cx="4.500" cy="8" r="2.500" /><path d="M6.500 10.500c0-5 8-5 8 0M1 15.500c0-6 7-6 7.500 0" /></g></svg></button>
        <button class="t24 gap" aria-label="显示隐藏的图标"><svg width="12" height="7" viewBox="0 0 12 7"><path fill="none" stroke="#fff" stroke-width="1.300" d="M0.500 6.500L6 1l5.500 5.500" /></svg></button>
        <button class="t24" aria-label="电池"><svg width="15" height="9" viewBox="0 0 15 9"><path fill="none" stroke="#fff" d="M0.500 0.500h12v8h-12zM14 3v3" /><path fill="#fff" d="M2 2h6v5H2z" /></svg></button>
        <button class="t22" aria-label="音量"><svg width="15" height="12" viewBox="0 0 15 12"><path fill="none" stroke="#fff" d="M0.500 4h2.500L6.500 0.500v11L3 8H0.500zM9 4l5 5M14 4L9 9" /></svg></button>
        <button class="t28 ime">中</button>
        <button class="t28"><span class="m">M</span></button>
        <button class="t44"><span class="badge">29</span></button>
        <button class="clock"><span>15:38</span><span>2019/4/26</span></button>
        <button class="t46" aria-label="通知"><svg width="16" height="16" viewBox="0 0 16 16"><path fill="none" stroke="#fff" stroke-width="1.200" d="M0.600 0.600h14.800v11.500H11L8 15l-2.500-2.900H0.600z" /></svg></button>
        <i class="peek"></i>
      </div>
    </footer>
  </div>
</template>

<style>
body { margin: 0; }
</style>

<style scoped>
* { box-sizing: border-box; }
.app { display: flex; flex-direction: column; height: 100vh; overflow: hidden; background: #e6e6e6; color: #262626; font: 12px/16px "Noto Sans", "Noto Sans CJK SC", sans-serif; }
button { display: inline-flex; align-items: center; justify-content: center; margin: 0; padding: 0; border: 0; background: none; color: inherit; font: inherit; white-space: nowrap; }
svg { display: block; flex: none; overflow: visible; }
input, select { font: inherit; color: inherit; }
.caret { flex: none; width: 0; height: 0; border: 3px solid transparent; border-top-color: #666; border-bottom: 0; }
.caret.large { border-width: 4px; border-bottom: 0; }

.head { position: relative; flex: none; background: #217346; color: #fff; }
.decor { position: absolute; top: 0; right: 0; overflow: hidden; }
.titlebar { position: relative; display: grid; grid-template-columns: 1fr auto 1fr; align-items: center; height: 34px; }
.quick { display: flex; align-items: center; padding-left: 22px; gap: 14px; }
.q { gap: 4px; height: 30px; }
.q .caret { border-top-color: #5f9c7a; }
.q.dim { gap: 4px; margin-right: -4px; }
.q:last-child { margin-left: 4px; }
.title { align-self: start; line-height: 30px; }
.sys { display: flex; align-self: start; justify-content: flex-end; align-items: center; height: 30px; }
.user { margin-right: 10px; }
.s { width: 46px; height: 30px; }
.menus { position: relative; display: flex; gap: 1px; height: 30px; padding-left: 4px; }
.menu { padding: 0 13px 2px; }
.file { margin-right: 6px; }
.menu.on { padding: 0 12px 2px; background: #f3f3f3; color: #217346; }
.tell { gap: 13px; margin-left: 16px; padding-bottom: 2px; }
.share { gap: 4px; margin-left: auto; padding-bottom: 2px; }
.smile { margin: 0 15px 2px 38px; }

.ribbon { display: flex; flex: none; height: 95px; background: #f3f3f3; border-bottom: 1px solid #d0d0d0; }
.group { position: relative; display: flex; flex-direction: column; flex: none; margin: 4px 0 5px; border-right: 1px solid #bbb; }
.clip { width: 93px; }
.font { width: 257px; }
.align { width: 246px; }
.number { width: 147px; }
.styles { width: 196px; }
.cells { width: 142px; }
.edit { width: 181px; }
.pv { width: 58px; }
.body { display: flex; flex: 1; padding-left: 8px; }
.clip .body { padding-left: 7px; }
.styles .body { padding-left: 6px; }
.pv .body { padding-left: 7px; }
.rows { display: flex; flex-direction: column; gap: 8px; padding-top: 7px; }
.body.rows { padding-left: 8px; }
.line { display: flex; align-items: center; }
.rows .line { height: 23px; }
.group footer { display: flex; align-items: center; height: 12px; }
.group footer span { flex: 1; text-align: center; }
.launch { align-self: flex-end; width: 16px; height: 8px; }
.big { flex-direction: column; justify-content: flex-start; width: 44px; height: 68px; padding-top: 2px; }
.big svg { margin-bottom: 2px; }
.big > .caret { margin-top: 5px; }
.styles .big { width: 56px; }
.styles .two { width: 60px; }
.styles .wider { width: 66px; }
.cells .big { width: 42px; }
.edit .big { width: 65px; }
.big .second { display: flex; align-items: center; gap: 3px; margin-top: -1px; }
.stack { display: flex; flex-direction: column; }
.tool { width: 22px; height: 23px; flex: none; }
.tool.wide { width: 24px; }
.stack .tool, .stack .drop { height: 22px; margin-bottom: 1px; }
.clip .stack .tool { width: 20px; }
.drop { width: 12px; height: 22px; flex: none; }
.drop.tight { width: 8px; }
.drop.far { margin-left: 6px; }
.sep { flex: none; width: 1px; height: 21px; margin: 0 4px; background: #d2d2d2; }
.tool.b, .tool.u { font-weight: 700; color: #555; font-size: 13px; }
.tool.u { text-decoration: underline; }
.tool.it { font: italic 700 14px "Liberation Serif", serif; color: #555; }
.tool.pct { font-size: 15px; color: #555; padding-bottom: 2px; }
.tool.pressed { background: #c6c6c6; }
.wen { flex-direction: column; font-size: 9px; line-height: 10px; padding-bottom: 2px; }
.wen b { font-size: 10px; color: #4a7ebb; }
.pick { position: relative; display: flex; align-items: center; height: 24px; background: #fff; border: 1px solid #c6c6c6; }
.pick + .pick { margin-left: -1px; }
.pick select { width: 100%; height: 22px; padding: 0 2px; border: 0; appearance: none; background: none; outline: 0; }
.pick .caret { position: absolute; right: 4px; pointer-events: none; }
.face { width: 158px; }
.size { width: 41px; }
.size select { font-size: 13px; }
.format { width: 131px; }
.left { width: 123px; }
.right { padding-left: 8px; align-self: flex-start; }
.right::before { content: ""; position: absolute; top: 6px; height: 54px; width: 1px; margin-left: -8px; background: #d2d2d2; }
.text { height: 23px; gap: 3px; align-self: flex-start; }
.collapse { align-self: flex-end; margin: 0 10px 3px auto; width: 10px; height: 10px; }

.formula { display: flex; align-items: center; flex: none; height: 48px; padding: 0 5px; }
.box { display: flex; align-items: center; height: 28px; background: #fdfdfd; border: 1px solid #c6c6c6; color: #444; }
.box input { flex: 1; min-width: 0; height: 24px; padding: 0; border: 0; background: none; outline: 0; font-size: 13px; }
.name { width: 102px; padding: 0 5px 0 6px; }
.grip { margin: 0 14px; }
.acts { width: 110px; margin-right: 3px; }
.acts button { flex: 1; height: 26px; }
.acts .fx { font: italic 700 15px/20px "Liberation Serif", serif; color: #555; }
.fx small { font-size: 11px; margin-top: 4px; }
.value { flex: 1; padding: 0 4px 0 11px; }

.sheet { display: flex; flex: 1; min-height: 0; }
.grid { flex: 1; min-width: 0; overflow: hidden; border-bottom: 1px solid #999; }
table { width: 100%; table-layout: fixed; border-collapse: separate; border-spacing: 0; font: 15px/18px Lato, "Noto Sans", sans-serif; color: #222; background: #fff; }
.rh { width: 29px; }
.c { width: 72px; }
tr { height: 19px; }
th, td { height: 19px; padding: 0; border: 0 solid #d4d4d4; border-width: 0 1px 1px 0; white-space: nowrap; }
th { font-weight: 400; background: #e6e6e6; text-align: center; }
thead th { padding-top: 2px; line-height: 16px; border-bottom-color: #999; border-right-color: #b4b4b4; }
tbody th { border-right-color: #999; border-bottom-color: #b4b4b4; }
thead th.sel, tbody th.sel { background: #d2d2d2; color: #217346; }
thead .corner { padding: 3px 3px 0 0; border-right-color: #999; }
.corner svg { margin-left: auto; }
thead .rest { border-right-color: #e6e6e6; }
td.rest { border-right-color: #999; }
td { padding: 2px 0 0 2px; line-height: 16px; overflow-x: clip; overflow-y: visible; }
tbody th { padding-top: 2px; line-height: 16px; }
td.num { text-align: right; padding-right: 2px; }
td.active { position: relative; overflow: visible; }
td.active::before { content: ""; position: absolute; inset: -2px; border: 2px solid #217346; }
td.active::after { content: ""; position: absolute; right: -3px; bottom: -3px; width: 5px; height: 5px; background: #217346; outline: 1px solid #fff; }
.vscroll { display: flex; flex-direction: column; width: 21px; padding: 2px 3px 0; }
.vscroll button, .hscroll button { flex: none; width: 15px; height: 15px; background: #fff; border: 1px solid #ababab; }
.vthumb { flex: 20; background: #fff; border: 1px solid #ababab; }
.vtrack { flex: 1; background: #dadada; }

.tabs { display: flex; align-items: center; flex: none; height: 28px; border-bottom: 1px solid #c6c6c6; }
.step { display: flex; gap: 24px; width: 100px; padding-left: 27px; }
.tab { align-self: flex-start; position: relative; height: 25px; margin-top: -1px; padding: 0 12px; background: #fff; border: 1px solid #ababab; border-width: 0 1px 2px; border-bottom-color: #217346; color: #217346; font-size: 13px; }
.add { margin-left: 33px; margin-bottom: 1px; }
.grip2 { margin-left: auto; }
.hscroll { display: flex; width: 511px; margin: 0 19px 0 15px; }
.hthumb { flex: 16; background: #fff; border: 1px solid #ababab; }
.htrack { flex: 1; background: #dadada; }

.status { display: flex; align-items: center; flex: none; height: 21px; background: #f3f3f3; }
.macro { margin: 0 0 1px 8px; }
.views { display: flex; height: 21px; margin-left: auto; margin-right: 2px; }
.views button { width: 38px; padding-bottom: 1px; }
.views .on { background: #c6c6c6; }
.pm { width: 11px; height: 20px; }
.slider { appearance: none; width: 100px; height: 20px; margin: 0 2px; background: linear-gradient(#ababab, #ababab) center / 100% 1px no-repeat; }
.slider::-webkit-slider-thumb { appearance: none; width: 5px; height: 11px; background: #666; border-radius: 0; }
.percent { margin: 0 8px 0 10px; color: #444; }

.taskbar { display: flex; flex: none; height: 40px; gap: 1px; background: linear-gradient(90deg, #1e1e1e, #2e2e2e); color: #fff; }
.app-btn { position: relative; width: 48px; height: 40px; }
.start { margin-right: 2px; }
.run { position: absolute; left: 4px; bottom: 0; width: 31px; height: 2px; background: #b0b0b0; }
.run.more { left: 35px; width: 9px; background: #777; }
.run.full { width: 40px; }
.run.whole { left: 0; width: 48px; }
.live { background: #505050; }
.tray { display: flex; margin-left: auto; }
.t22 { width: 22px; }
.t24 { width: 24px; }
.t28 { width: 28px; }
.t30 { width: 30px; }
.t44 { width: 44px; }
.t46 { width: 46px; }
.gap { margin-left: 9px; }
.ime { font-size: 13px; }
.m { width: 15px; height: 15px; background: #fff; color: #222; font: 700 13px/15px "Noto Sans", sans-serif; text-align: center; }
.badge { width: 22px; height: 22px; border: 2px solid #0bd46c; border-radius: 50%; font-size: 13px; line-height: 18px; background: linear-gradient(transparent 65%, #0bd46c 65%); }
.clock { flex-direction: column; gap: 3px; width: 66px; }
.peek { width: 1px; margin: 0 5px 0 4px; background: #777; }
</style>
